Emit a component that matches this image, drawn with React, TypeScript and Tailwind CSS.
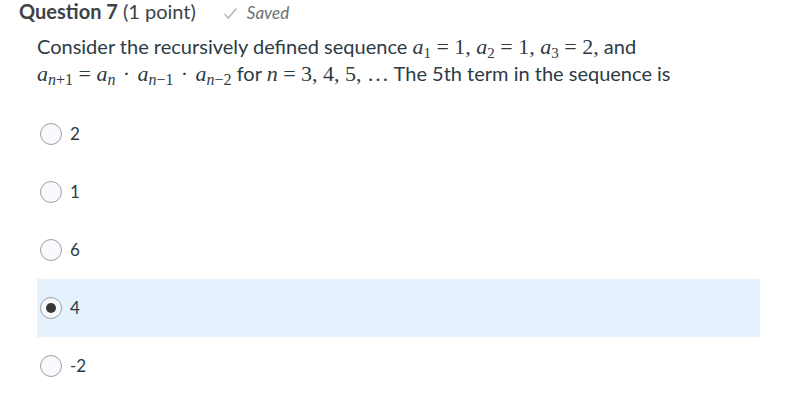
import React from "react";

const serif = { fontFamily: '"Liberation Serif", "Times New Roman", serif' };

const M = ({ children }: { children: React.ReactNode }) => (
  <span className="italic text-[22px]" style={serif}>{children}</span>
);
const R = ({ children }: { children: React.ReactNode }) => (
  <span className="text-[22px]" style={serif}>{children}</span>
);
const Sub = ({ children, big }: { children: React.ReactNode; big?: boolean }) => (
  <span className={`${big ? "text-[16px]" : "text-[15px]"} relative top-[4px]`} style={serif}>{children}</span>
);
const Eq = () => <R>{"\u2005=\u2005"}</R>;
const Dot = () => <R>{"\u2004·\u2004"}</R>;

function Option({ label, selected }: { label: string; selected?: boolean }) {
  return (
    <div className={`flex items-center h-[58px] pl-[3px] ${selected ? "bg-[#e5f1fd]" : ""}`}>
      <div className="w-[22px] h-[22px] rounded-full border border-[#a0a0a0] bg-[#f8f9fc] flex items-center justify-center">
        {selected && <div className="w-[10px] h-[10px] rounded-full bg-[#383838]" />}
      </div>
      <span className="ml-[8px] text-[17px] text-[#2d3b45]">{label}</span>
    </div>
  );
}

export default function App() {
  return (
    <div className="w-[792px] h-[413px] bg-white" style={{ fontFamily: 'Lato, "Open Sans", sans-serif' }}>
      <div className="flex items-baseline pl-[19px] leading-[24px] -mt-[1px]">
        <span className="text-[20px] font-bold text-[#3d4246]">Question 7</span>
        <span className="text-[20px] text-[#3d4246] ml-[5px]">(1 point)</span>
        <span className="ml-[27px] flex items-baseline text-[17px] italic text-[#6d7073]">
          <svg width="15" height="13" viewBox="0 0 15 13" className="mr-[9px] self-center" fill="none">
            <path d="M1.5 7 L5.3 11 L13.5 1.5" stroke="#b8bcbf" strokeWidth="1.7" />
          </svg>
          Saved
        </span>
      </div>
      <div className="pl-[37px] pr-[10px] pt-[9px] text-[20px] leading-[24px] text-[#2d3b45]">
        <div className="whitespace-nowrap">
          Consider the recursively defined sequence <M>a</M><Sub>1</Sub><Eq /><R>1, </R><M>a</M><Sub>2</Sub><Eq /><R>1, </R><M>a</M><Sub>3</Sub><Eq /><R>2,</R> and
        </div>
        <div className="whitespace-nowrap">
          <M>a</M><Sub big><span className="italic">n</span>+1</Sub><Eq /><M>a</M><Sub big><span className="italic">n</span></Sub><Dot /><M>a</M><Sub big><span className="italic">n</span>−1</Sub><Dot /><M>a</M><Sub big><span className="italic">n</span>−2</Sub> for <M>n</M><Eq /><R>3, 4, 5, …</R> The 5th term in the sequence is
        </div>
      </div>
      <div className="pl-[37px] pr-[32px] pt-[17px]">
        <Option label="2" />
        <Option label="1" />
        <Option label="6" />
        <Option label="4" selected />
        <Option label="-2" />
      </div>
    </div>
  );
}
